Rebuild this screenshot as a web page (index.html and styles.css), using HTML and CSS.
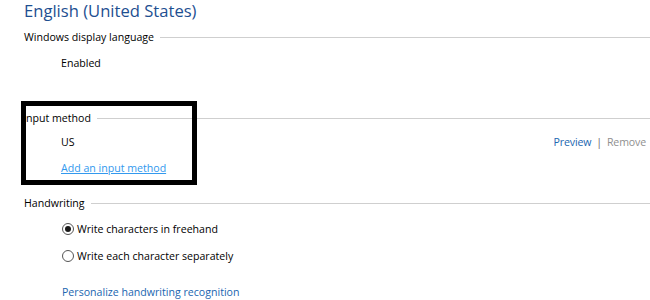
FILE: index.html
```html
<!DOCTYPE html>
<html>
<head>
<meta charset="utf-8">
<link rel="stylesheet" href="styles.css">
</head>
<body>
<div class="page">
  <h1 class="title">English (United States)</h1>

  <div class="section sec-display">
    <div class="head"><span>Windows display language</span><span class="rule"></span></div>
    <div class="item">Enabled</div>
  </div>

  <div class="section sec-input">
    <div class="head"><span>nput method</span><span class="rule"></span></div>
    <div class="row">
      <span class="item">US</span>
      <span class="actions"><a class="link-dark">Preview</a><span class="sep">|</span><span class="disabled">Remove</span></span>
    </div>
    <a class="item link">Add an input method</a>
    <div class="highlight"></div>
  </div>

  <div class="section sec-hand">
    <div class="head"><span>Handwriting</span><span class="rule"></span></div>
    <label class="radio"><span class="dot checked"></span>Write characters in freehand</label>
    <label class="radio"><span class="dot"></span>Write each character separately</label>
    <a class="item link-dark personal">Personalize handwriting recognition</a>
  </div>
</div>
</body>
</html>
```

FILE: styles.css
```css
html, body {
  margin: 0;
  padding: 0;
  background: #ffffff;
  width: 650px;
  height: 300px;
  overflow: hidden;
}
.page {
  font-family: "Open Sans", "Noto Sans", sans-serif;
  font-size: 10.6px;
  color: #000000;
  padding-left: 24px;
  position: relative;
}
.title {
  margin: 0;
  font-weight: normal;
  font-size: 16.6px;
  line-height: 22px;
  color: #1e4f91;
  padding-top: 0;
}
.section {
  position: relative;
}
.head {
  display: flex;
  align-items: center;
  height: 16px;
  gap: 6px;
}
.rule {
  flex: 1;
  height: 1px;
  background: #cfcfcf;
}
.sec-display { margin-top: 7px; }
.sec-display .item { margin-top: 10px; }
.item {
  display: block;
  margin-left: 37px;
  line-height: 16px;
}
.sec-input { margin-top: 39px; }
.sec-input .head { padding-left: 2px; }
.row {
  display: flex;
  justify-content: space-between;
  align-items: center;
  margin-top: 8px;
  padding-right: 4px;
}
.actions { display: flex; gap: 5px; letter-spacing: -0.15px; }
.sep { color: #6a6a6a; }
.disabled { color: #8f8f8f; }
.link-dark { color: #2166b0; }
.link {
  color: #3399ee;
  text-decoration: underline;
  margin-top: 10px;
}
.highlight {
  position: absolute;
  left: -3px;
  top: -9px;
  width: 166px;
  height: 74px;
  border: 5px solid #000;
}
.sec-hand { margin-top: 19px; }
.radio {
  display: flex;
  align-items: center;
  margin-left: 38px;
  height: 16px;
  margin-top: 10px;
  gap: 3px;
}
.radio + .radio { margin-top: 11px; }
.dot {
  width: 10px;
  height: 10px;
  border: 1px solid #555;
  border-radius: 50%;
  position: relative;
  box-sizing: content-box;
}
.dot.checked::after {
  content: "";
  position: absolute;
  left: 2px;
  top: 2px;
  width: 6px;
  height: 6px;
  border-radius: 50%;
  background: #1a1a1a;
}
.personal {
  margin-left: 38px;
  margin-top: 20px;
}
```
